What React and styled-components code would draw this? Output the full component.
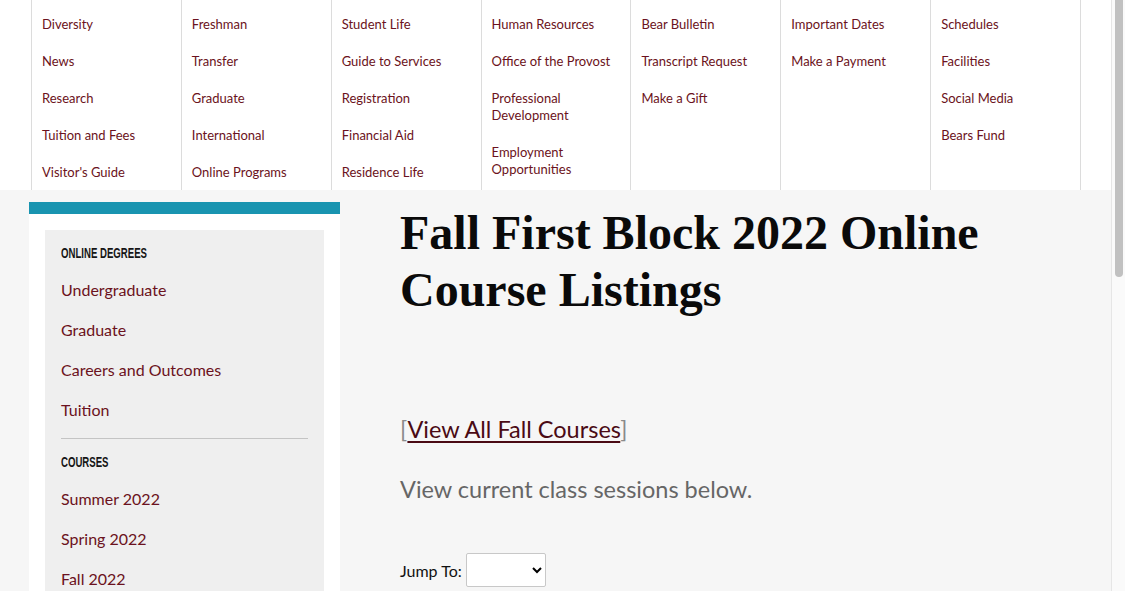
import styled, { createGlobalStyle } from "styled-components";

const GlobalStyle = createGlobalStyle`
  html, body {
    margin: 0;
    padding: 0;
    background: #f6f6f6;
    overflow: hidden;
  }
  body {
    font-family: "Lato", "Open Sans", sans-serif;
  }
`;

const maroon = "#6b1220";

const Frame = styled.div`
  display: flex;
  height: 100vh;
`;

const Page = styled.div`
  flex: 1;
  min-width: 0;
  overflow: hidden;
`;

const ScrollTrack = styled.div`
  width: 14px;
  flex-shrink: 0;
  box-sizing: border-box;
  background: #fafafa;
  border-left: 1px solid #e6e6e6;
  padding: 0 2px 0 3px;
`;

const ScrollThumb = styled.div`
  height: 277px;
  background: #c1c1c1;
  border-radius: 0 0 4px 4px;
`;

const MegaMenu = styled.nav`
  background: #ffffff;
`;

const MenuGrid = styled.div`
  width: 1049px;
  margin: 0 0 0 31px;
  display: grid;
  grid-template-columns: repeat(7, 1fr);
  border-right: 1px solid #dcdcdc;
`;

const MenuColumn = styled.ul`
  list-style: none;
  margin: 0;
  padding: 16px 10px 10px 10px;
  border-left: 1px solid #dcdcdc;
  height: 164px;
  display: flex;
  flex-direction: column;
  gap: 20px;
`;

const MenuLink = styled.li`
  font-size: 13px;
  line-height: 17px;
  color: ${maroon};
`;

const Body = styled.div`
  display: flex;
  gap: 60px;
  padding: 12px 29px 0 29px;
`;

const Sidebar = styled.aside`
  width: 311px;
  flex-shrink: 0;
  align-self: flex-start;
  background: #ffffff;
  border-top: 12px solid #1994b0;
  padding: 16px;
  box-sizing: border-box;
`;

const SideBox = styled.div`
  background: #efefef;
  padding: 14px 16px 20px 16px;
`;

const SideHeading = styled.h4`
  margin: 0 0 ${(p) => p.$gap}px 0;
  height: 17px;
  font-family: "Liberation Sans", "DejaVu Sans", sans-serif;
  font-weight: bold;
  font-size: 15.5px;
  line-height: 17px;
  color: #151515;
  text-transform: uppercase;
  white-space: nowrap;
  transform: scaleX(0.62);
  transform-origin: left center;
`;

const SideList = styled.ul`
  list-style: none;
  margin: 0;
  padding: 0;
  display: flex;
  flex-direction: column;
  gap: 20px;
`;

const SideLink = styled.li`
  font-size: 16px;
  line-height: 20px;
  color: ${maroon};
`;

const SideRule = styled.hr`
  border: none;
  border-top: 1px solid #c4c4c4;
  margin: 18px 0 14px 0;
`;

const Main = styled.main`
  flex: 1;
  padding-top: 2px;
`;

const Title = styled.h1`
  margin: 0;
  font-family: "Liberation Serif", "DejaVu Serif", serif;
  font-weight: bold;
  font-size: 48px;
  line-height: 57px;
  color: #0a0a0a;
  max-width: 640px;
`;

const ViewAll = styled.p`
  margin: 97px 0 0 0;
  font-size: 23.5px;
  line-height: 28px;
  color: #8a8a8a;
`;

const ViewAllLink = styled.a`
  color: #4a0a14;
  text-decoration: underline;
  text-underline-offset: 3px;
  text-decoration-thickness: 2px;
`;

const Lead = styled.p`
  margin: 32px 0 0 0;
  font-size: 23.5px;
  line-height: 28px;
  color: #666666;
`;

const JumpRow = styled.label`
  margin-top: 50px;
  display: flex;
  align-items: center;
  gap: 4px;
  font-size: 16px;
  color: #111111;
`;

const JumpSelect = styled.select`
  width: 80px;
  height: 34px;
  background: #ffffff;
  border: 1px solid #c8c8c8;
  border-radius: 2px;
`;

const menuColumns = [
  ["Diversity", "News", "Research", "Tuition and Fees", "Visitor's Guide"],
  ["Freshman", "Transfer", "Graduate", "International", "Online Programs"],
  ["Student Life", "Guide to Services", "Registration", "Financial Aid", "Residence Life"],
  ["Human Resources", "Office of the Provost", "Professional Development", "Employment Opportunities"],
  ["Bear Bulletin", "Transcript Request", "Make a Gift"],
  ["Important Dates", "Make a Payment"],
  ["Schedules", "Facilities", "Social Media", "Bears Fund"],
];

const degrees = ["Undergraduate", "Graduate", "Careers and Outcomes", "Tuition"];
const courses = ["Summer 2022", "Spring 2022", "Fall 2022", "Winter 2022"];

export default function App() {
  return (
    <>
      <GlobalStyle />
      <Frame>
        <Page>
          <MegaMenu>
            <MenuGrid>
              {menuColumns.map((col, i) => (
                <MenuColumn key={i}>
                  {col.map((item) => (
                    <MenuLink key={item}>{item}</MenuLink>
                  ))}
                </MenuColumn>
              ))}
            </MenuGrid>
          </MegaMenu>
          <Body>
            <Sidebar>
              <SideBox>
                <SideHeading $gap={19}>Online Degrees</SideHeading>
                <SideList>
                  {degrees.map((d) => (
                    <SideLink key={d}>{d}</SideLink>
                  ))}
                </SideList>
                <SideRule />
                <SideHeading $gap={19}>Courses</SideHeading>
                <SideList>
                  {courses.map((c) => (
                    <SideLink key={c}>{c}</SideLink>
                  ))}
                </SideList>
              </SideBox>
            </Sidebar>
            <Main>
              <Title>Fall First Block 2022 Online Course Listings</Title>
              <ViewAll>
                [<ViewAllLink>View All Fall Courses</ViewAllLink>]
              </ViewAll>
              <Lead>View current class sessions below.</Lead>
              <JumpRow>
                Jump To:
                <JumpSelect>
                  <option></option>
                </JumpSelect>
              </JumpRow>
            </Main>
          </Body>
        </Page>
        <ScrollTrack>
          <ScrollThumb />
        </ScrollTrack>
      </Frame>
    </>
  );
}
